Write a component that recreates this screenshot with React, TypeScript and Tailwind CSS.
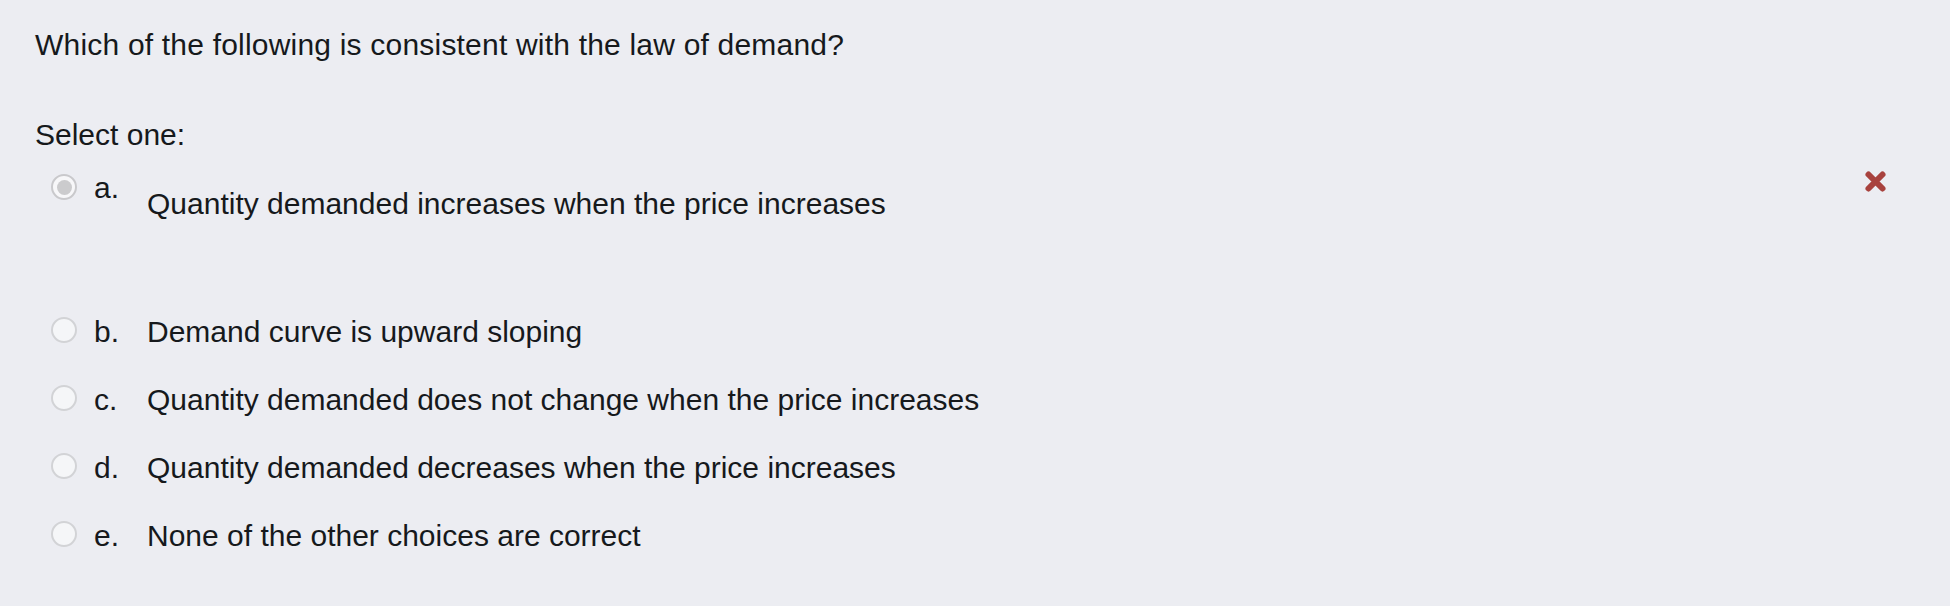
import React from "react";

type Choice = { key: string; text: string; checked?: boolean; wrong?: boolean };

const choices: Choice[] = [
  { key: "a.", text: "Quantity demanded increases when the price increases", checked: true, wrong: true },
  { key: "b.", text: "Demand curve is upward sloping" },
  { key: "c.", text: "Quantity demanded does not change when the price increases" },
  { key: "d.", text: "Quantity demanded decreases when the price increases" },
  { key: "e.", text: "None of the other choices are correct" },
];

function Radio({ checked }: { checked?: boolean }) {
  if (checked) {
    return (
      <span className="flex h-[26px] w-[26px] shrink-0 items-center justify-center rounded-full border-2 border-[#c9c9cc] bg-[#f7f7f9]">
        <span className="block h-[15px] w-[15px] rounded-full bg-[#cbcbcd]" />
      </span>
    );
  }
  return <span className="block h-[26px] w-[26px] shrink-0 rounded-full border-2 border-[#d2d3d6] bg-[#f5f6f8]" />;
}

function WrongMark() {
  return (
    <svg width="23" height="23" viewBox="0 0 23 23" className="shrink-0">
      <path d="M4.5 4.5 L18.5 18.5 M18.5 4.5 L4.5 18.5" stroke="#a8423e" strokeWidth="6" strokeLinecap="round" />
    </svg>
  );
}

export default function App() {
  return (
    <div className="h-[606px] w-full bg-[#ecedf2] pl-[35px] pt-[27px] pr-[63px] text-[30px] leading-[36px] text-[#16191c] [font-family:'Liberation_Sans',Arial,sans-serif]">
      <div className="tracking-[0.2px]">Which of the following is consistent with the law of demand?</div>

      <div className="mt-[54px]">Select one:</div>

      <div className="mt-[17px] flex flex-col gap-[32px]">
        {choices.map((c) => (
          <div key={c.key} className="flex items-start">
            <div className={c.checked ? "ml-[16px] mt-[4px]" : "ml-[16px] mt-[3px]"}>
              <Radio checked={c.checked} />
            </div>
            <span className="ml-[17px] w-[53px] shrink-0">{c.key}</span>
            <div className={c.wrong ? "flex-1 pt-[16px] pb-[60px]" : "flex-1"}>{c.text}</div>
            {c.wrong && <WrongMark />}
          </div>
        ))}
      </div>
    </div>
  );
}
